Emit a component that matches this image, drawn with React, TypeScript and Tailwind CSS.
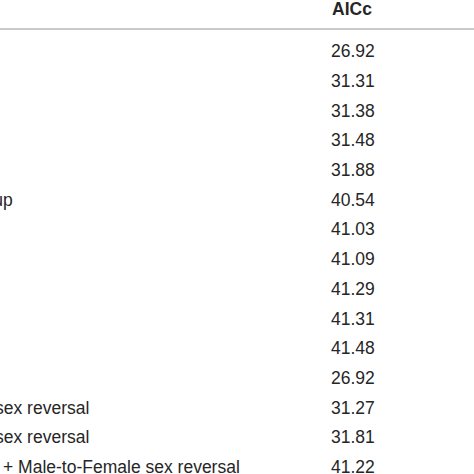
import React from "react";

interface Row {
  label: string;
  offset: string;
  aicc: string;
}

const rows: Row[] = [
  { label: "", offset: "", aicc: "26.92" },
  { label: "", offset: "", aicc: "31.31" },
  { label: "", offset: "", aicc: "31.38" },
  { label: "", offset: "", aicc: "31.48" },
  { label: "", offset: "", aicc: "31.88" },
  { label: "group", offset: "-ml-[32px]", aicc: "40.54" },
  { label: "", offset: "", aicc: "41.03" },
  { label: "", offset: "", aicc: "41.09" },
  { label: "", offset: "", aicc: "41.29" },
  { label: "", offset: "", aicc: "41.31" },
  { label: "", offset: "", aicc: "41.48" },
  { label: "", offset: "", aicc: "26.92" },
  { label: "sex reversal", offset: "-ml-[5px]", aicc: "31.27" },
  { label: "sex reversal", offset: "-ml-[5px]", aicc: "31.81" },
  { label: "+ Male-to-Female sex reversal", offset: "ml-[3px]", aicc: "41.22" },
];

export default function App() {
  return (
    <div
      className="w-[474px] h-[474px] overflow-hidden bg-white text-[#262626] text-[17.5px]"
      style={{ fontFamily: '"Liberation Sans", Arial, sans-serif' }}
    >
      {/* header */}
      <div className="grid grid-cols-[331px_1fr] h-[28px] items-start border-b-2 border-[#c9c9c9] box-content leading-none">
        <div />
        <div className="font-bold pt-[1px] pl-[1px]">AICc</div>
      </div>

      <div className="pt-[7px]">
        {rows.map((r, i) => (
          <div key={i} className="grid grid-cols-[331px_1fr] h-[29.72px] items-center leading-none">
            <div className="whitespace-nowrap">
              {r.label && <span className={`block ${r.offset}`}>{r.label}</span>}
            </div>
            <div>{r.aicc}</div>
          </div>
        ))}
      </div>
    </div>
  );
}
